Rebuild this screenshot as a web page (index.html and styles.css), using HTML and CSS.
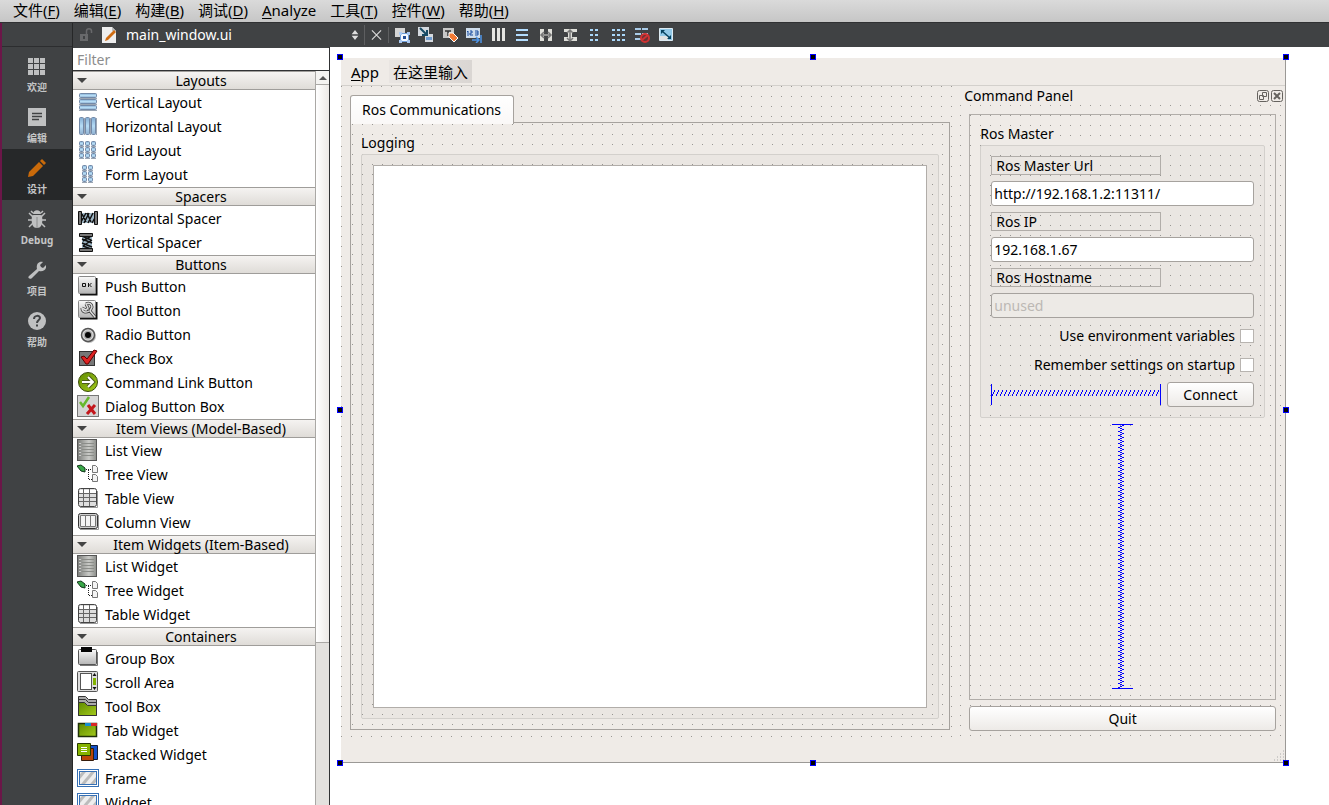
FILE: index.html
```html
<!DOCTYPE html>
<html lang="zh-CN">
<head>
    <meta charset="UTF-8">
    <meta name="viewport" content="width=device-width, initial-scale=1.0">
    <title>main_window.ui</title>
    <link rel="stylesheet" href="styles.css">
</head>
<body>
    <svg class="defs" aria-hidden="true">
        <defs>
            <linearGradient id="blue" x1="0" y1="0" x2="0" y2="1"><stop offset="0" stop-color="#83acd2"/><stop offset=".5" stop-color="#b6dcf5"/><stop offset="1" stop-color="#8fb0d0"/></linearGradient>
            <linearGradient id="grey" x1="0" y1="0" x2="0" y2="1"><stop offset="0" stop-color="#fafafa"/><stop offset="1" stop-color="#b5b5b5"/></linearGradient>
            <linearGradient id="metal"><stop offset="0" stop-color="#7b7d7a"/><stop offset=".6" stop-color="#c9cac7"/><stop offset="1" stop-color="#8b8d89"/></linearGradient>
            <linearGradient id="green" x1="0" y1="0" x2="1" y2="1"><stop offset="0" stop-color="#5f8a00"/><stop offset="1" stop-color="#a4cb1c"/></linearGradient>
            <pattern id="hatch-h" width="4" height="6" patternUnits="userSpaceOnUse"><path d="M2 0h1v2H2zM1 2h1v2H1zM0 4h1v2H0z" fill="#00f"/></pattern>
            <pattern id="hatch-v" width="6" height="4" patternUnits="userSpaceOnUse"><path d="M0 2h2v1H0zM2 1h2v1H2zM4 0h2v1H4zM2 3h2v1H2z" fill="#00f"/></pattern>
            <pattern id="stripes" width="7" height="7" patternUnits="userSpaceOnUse" patternTransform="rotate(40)"><rect width="3" height="7" fill="#bcbcbc"/></pattern>
        </defs>

        <symbol id="i-vlayout" viewBox="0 0 22 22"><g fill="url(#blue)" stroke="#7289a8"><rect x="2.500" y="2.500" width="17" height="4" rx="1"/><rect x="2.500" y="8.500" width="17" height="4" rx="1"/><rect x="2.500" y="14.500" width="17" height="4" rx="1"/></g><path d="M2 7.500h18M2 13.500h18M2 19.500h18" stroke="#9aa5b3"/></symbol>
        <symbol id="i-hlayout" viewBox="0 0 22 22"><g fill="url(#blue)" stroke="#7289a8"><rect x="2.500" y="2.500" width="4" height="17" rx="1"/><rect x="8.500" y="2.500" width="4" height="17" rx="1"/><rect x="14.500" y="2.500" width="4" height="17" rx="1"/></g><path d="M7.500 3v17M13.500 3v17M19.500 3v17" stroke="#9aa5b3"/></symbol>
        <symbol id="i-form" viewBox="0 0 22 22"><g fill="url(#blue)" stroke="#7289a8"><rect x="5.500" y="2.500" width="4" height="4" rx="1"/><rect x="11.500" y="2.500" width="4" height="4" rx="1"/><rect x="5.500" y="8.500" width="4" height="4" rx="1"/><rect x="11.500" y="8.500" width="4" height="4" rx="1"/><rect x="5.500" y="14.500" width="4" height="4" rx="1"/><rect x="11.500" y="14.500" width="4" height="4" rx="1"/></g><path d="M5 7.500h5M11 7.500h5M5 13.500h5M11 13.500h5M5 19.500h5M11 19.500h5" stroke="#9aa5b3"/></symbol>
        <symbol id="i-grid" viewBox="0 0 22 22"><g fill="url(#blue)" stroke="#7289a8"><rect x="2.500" y="2.500" width="4" height="4" rx="1"/><rect x="8.500" y="2.500" width="4" height="4" rx="1"/><rect x="14.500" y="2.500" width="4" height="4" rx="1"/><rect x="2.500" y="8.500" width="4" height="4" rx="1"/><rect x="8.500" y="8.500" width="4" height="4" rx="1"/><rect x="14.500" y="8.500" width="4" height="4" rx="1"/><rect x="2.500" y="14.500" width="4" height="4" rx="1"/><rect x="8.500" y="14.500" width="4" height="4" rx="1"/><rect x="14.500" y="14.500" width="4" height="4" rx="1"/></g><path d="M2 7.500h5M8 7.500h5M14 7.500h5M2 13.500h5M8 13.500h5M14 13.500h5M2 19.500h5M8 19.500h5M14 19.500h5" stroke="#9aa5b3"/></symbol>
        <symbol id="i-hspacer" viewBox="0 0 22 22"><path d="M4 6h14v10H4z" fill="#9db6c6"/><path d="M4 15l5-9M7 16l5-10M11 16l5-10M15 16l4-7M5 7l4 8M10 6l4 9" stroke="#111" stroke-width="1.500"/><path d="M1.500 4.500h3v13h-3zM17.500 4.500h3v13h-3z" fill="#777" stroke="#111"/></symbol>
        <symbol id="i-vspacer" viewBox="0 0 22 22"><path d="M5 4h10v14H5z" fill="#9db6c6"/><path d="M5 5l9 4M5 8l10 4M5 12l10 4M6 15l8 3M14 5l-8 5M15 9l-9 6" stroke="#111" stroke-width="1.500"/><path d="M2.500 2.500h13v3h-13zM2.500 17.500h13v3h-13z" fill="#777" stroke="#111"/></symbol>
        <symbol id="i-push" viewBox="0 0 22 22"><path d="M19.500 3v16.500H3" fill="none" stroke="#111" stroke-width="2"/><rect x="1.500" y="1.500" width="17" height="17" rx="1" fill="url(#grey)" stroke="#888"/><path d="M5.500 8.500h3v3h-3zM11.500 8v4M14.500 8l-2 2 2 2" fill="none" stroke="#111"/></symbol>
        <symbol id="i-tool" viewBox="0 0 22 22"><path d="M19.500 3v16.500H3" fill="none" stroke="#111" stroke-width="2"/><rect x="1.500" y="1.500" width="17" height="17" rx="1" fill="url(#grey)" stroke="#888"/><path d="M9 5c3-2 6 0 6 3l-2 4 5 6M5 9c0 4 4 5 7 3M9 5l2 4-2 2-4-2" fill="none" stroke="#444" stroke-width="3"/><path d="M9 5c3-2 6 0 6 3l-2 4 5 6M5 9c0 4 4 5 7 3M9 5l2 4-2 2-4-2" fill="none" stroke="#ddd" stroke-width="1.500"/></symbol>
        <symbol id="i-radio" viewBox="0 0 22 22"><circle cx="12" cy="13" r="7" fill="#bbb"/><circle cx="11" cy="12" r="6.500" fill="#ddd" stroke="#555" stroke-width="1.500"/><circle cx="11" cy="12" r="4.500" fill="#aaa"/><circle cx="11" cy="12" r="3" fill="#050505"/></symbol>
        <symbol id="i-check" viewBox="0 0 22 22"><rect x="2.500" y="4.500" width="15" height="14" fill="#777" stroke="#333"/><path d="M4 10l3-1 3 3 7-9 3 1-9 13H9z" fill="#df2222" stroke="#610000"/></symbol>
        <symbol id="i-command" viewBox="0 0 22 22"><circle cx="11" cy="11" r="9.500" fill="url(#green)" stroke="#3c4d0c"/><path d="M5 11h10M11 6l5 5-5 5" fill="none" stroke="#4a5a1a" stroke-width="4"/><path d="M5 11h10M11 6l5 5-5 5" fill="none" stroke="#fff" stroke-width="2"/></symbol>
        <symbol id="i-dialog" viewBox="0 0 22 22"><rect x=".5" y=".5" width="21" height="21" fill="#d5d5d5" stroke="#777"/><path d="M3 7l3 4 6-9" fill="none" stroke="#67b82c" stroke-width="2.500"/><path d="M11 10l7 9M18 10l-8 9" fill="none" stroke="#c3161c" stroke-width="3"/></symbol>
        <symbol id="i-list" viewBox="0 0 22 22"><rect x=".5" y=".5" width="19" height="21" fill="url(#metal)" stroke="#555"/><path d="M5 4.500h12M5 7.500h12M5 10.500h12M5 13.500h12M5 16.500h12" stroke="#8b8d89"/><path d="M2 4.500h2M2 7.500h2M2 10.500h2M2 13.500h2M2 16.500h2" stroke="#ccc"/></symbol>
        <symbol id="i-tree" viewBox="0 0 22 22"><path d="M0 3l4-1 4 3v4l-4-1z" fill="#39a848" stroke="#12351a"/><path d="M9 6.500h5M11.500 7v10M12 16.500h3" fill="none" stroke="#222" stroke-dasharray="1 1"/><path d="M15.500 2.500h3l2 2v5h-5zM15.500 11.500h3l2 2v5h-5z" fill="#f3f3f3" stroke="#777"/></symbol>
        <symbol id="i-table" viewBox="0 0 22 22"><path d="M3 20.500h17.500V4" fill="none" stroke="#999"/><rect x="1.500" y="1.500" width="18" height="18" rx="2" fill="#dedede" stroke="#444"/><path d="M3 3h16v3H3z" fill="#fff"/><path d="M2 6.500h17M2 10.500h17M2 14.500h17M6.500 2v17M12.500 2v17" stroke="#666"/></symbol>
        <symbol id="i-column" viewBox="0 0 22 22"><path d="M3 18.500h18.500V4" fill="none" stroke="#999"/><rect x="1.500" y="2.500" width="19" height="15" rx="2" fill="#cfcfcf" stroke="#333"/><path d="M3.500 4.500h5v11h-5zM8.500 4.500h5v11h-5zM13.500 4.500h5v11h-5z" fill="#f4f4f4" stroke="#777"/></symbol>
        <symbol id="i-group" viewBox="0 0 22 22"><path d="M3 18.500h17.500V5" fill="none" stroke="#777"/><rect x="1.500" y="2.500" width="18" height="15" rx="1" fill="url(#grey)" stroke="#555"/><path d="M4 0h11v5H4z" fill="#050505"/></symbol>
        <symbol id="i-scroll" viewBox="0 0 22 22"><rect x=".5" y=".5" width="20" height="20" rx="1" fill="#ddd" stroke="#555"/><rect x="3.500" y="2.500" width="11" height="16" fill="#fff" stroke="#555"/><path d="M16 7h3v7h-3z" fill="#82b200"/><path d="M15.500 5l2-3 2 3zM15.500 16l2 3 2-3z" fill="#111"/></symbol>
        <symbol id="i-toolbox" viewBox="0 0 22 22"><path d="M1.500 1.500h7l3 3h8v16h-18z" fill="#aaa" stroke="#333"/><path d="M1.500 4.500h7l3 3h8" fill="none" stroke="#333"/><path d="M1.500 7.500h6l3 3h9v10h-18z" fill="url(#green)" stroke="#333"/></symbol>
        <symbol id="i-tab" viewBox="0 0 22 22"><path d="M1.500 4.500h18v13h-18z" fill="url(#green)" stroke="#20300a" stroke-width="1.500"/><path d="M8 4h6v3H8z" fill="#178ed0"/><path d="M14 4h6v3h-6z" fill="#d92727"/></symbol>
        <symbol id="i-stack" viewBox="0 0 22 22"><path d="M8.500 2.500h12v14h-10z" fill="#1450c8" stroke="#111b36"/><path d="M4.500 5.500h12v12h-12z" fill="#b94508" stroke="#351c0c"/><path d="M.5.500h13v12H.5z" fill="#86b300" stroke="#283a00"/><path d="M4 4.500h6M4 6.500h6M4 8.500h6" stroke="#fff"/></symbol>
        <symbol id="i-frame" viewBox="0 0 22 22"><rect x=".5" y="2.500" width="21" height="17" fill="#fff" stroke="#3670b5"/><rect x="2.500" y="4.500" width="17" height="13" fill="#eee" stroke="#3670b5"/><rect x="3" y="5" width="16" height="12" fill="url(#stripes)"/></symbol>
    </svg>

    <nav class="menubar">
        <button>文件(<u>F</u>)</button>
        <button>编辑(<u>E</u>)</button>
        <button>构建(<u>B</u>)</button>
        <button>调试(<u>D</u>)</button>
        <button><u>A</u>nalyze</button>
        <button>工具(<u>T</u>)</button>
        <button>控件(<u>W</u>)</button>
        <button>帮助(<u>H</u>)</button>
    </nav>

    <div class="workspace">
        <nav class="modes">
            <div class="modes-top"></div>
            <button class="mode">
                <svg viewBox="0 0 18 18"><path d="M0 1h5v5H0zM6 1h5v5H6zM12 1h5v5h-5zM0 7h5v5H0zM6 7h5v5H6zM12 7h5v5h-5zM0 13h5v5H0zM6 13h5v5H6zM12 13h5v5h-5z"/></svg>
                欢迎
            </button>
            <button class="mode">
                <svg viewBox="0 0 18 18"><path d="M0 0h18v18H0z"/><path d="M4 5.500h10M4 8.500h10M4 11.500h7" stroke="#404244" stroke-width="1.500"/></svg>
                编辑
            </button>
            <button class="mode active">
                <svg viewBox="0 0 18 18"><path d="M0 18l1-5L11 3l4 4L5 17zM12 2l2-2 4 4-2 2z"/></svg>
                设计
            </button>
            <button class="mode">
                <svg viewBox="0 0 18 18"><path d="M5 4c0-5 8-5 8 0zM4 6c0-1 1-1 5-1s5 0 5 1c1 6 0 12-5 12S3 12 4 6z"/><path d="M1 3l4 4M17 3l-4 4M0 10h18M1 17l4-4M17 17l-4-4M5 3L3 1M13 3l2-2" fill="none" stroke="#bfc0c1" stroke-width="1.500"/><path d="M9 7v11" stroke="#8a8b8c"/></svg>
                Debug
            </button>
            <button class="mode">
                <svg viewBox="0 0 18 18"><path d="M1 15L9 8C8 4 10 0 15 1l-3 3 1 2 2 1 3-3c1 5-3 7-7 6l-7 7c-2 2-5 0-3-2z"/></svg>
                项目
            </button>
            <button class="mode">
                <svg viewBox="0 0 18 18"><circle cx="9" cy="9" r="9"/><path d="M6 7c0-4 6-4 6-1 0 2-3 2-3 5M9 12.500v2" fill="none" stroke="#404244" stroke-width="2"/></svg>
                帮助
            </button>
        </nav>

        <div class="editor">
            <div class="toolbar">
                <svg class="lock" viewBox="0 0 14 14"><path d="M1 6h8v7H1z" fill="#68696b"/><path d="M7.500 6V3c0-3 5-3 5 0v2" fill="none" stroke="#68696b" stroke-width="1.500"/><path d="M4 8h2v3H4z" fill="#404244"/></svg>
                <svg class="tool-icon" viewBox="0 0 16 16"><path d="M1 0h10l4 4v12H1z" fill="#eee"/><path d="M11 0l4 4h-4z" fill="#bbb"/><path d="M4 14l1-3 8-8 2 2-8 8z" fill="#cf6c12"/></svg>
                <div class="open-file">
                    <select aria-label="Open documents"><option>main_window.ui</option></select>
                    <svg viewBox="0 0 8 12"><path d="M0 5l4-5 4 5zM0 7l4 5 4-5z" fill="#ddd"/></svg>
                </div>
                <button class="close-file" aria-label="Close"><svg viewBox="0 0 12 12"><path d="M1 1l10 10M11 1L1 11" stroke="#ddd" stroke-width="1.200"/></svg></button>
                <div class="tools">
                    <button aria-label="Edit Widgets"><svg viewBox="0 0 16 16"><path d="M1 1h10v9H1z" fill="#d4d4d4"/><path d="M6.500 6.500h8v8h-8z" fill="#f4f9ff" stroke="#6f9fdc"/><path d="M5 5h3v3H5zM13 5h3v3h-3zM5 13h3v3H5zM13 13h3v3h-3z" fill="#a9c8f0"/><path d="M9 9h3v3H9z" fill="#234c93"/></svg></button>
                    <button aria-label="Edit Signals/Slots"><svg viewBox="0 0 16 16"><path d="M0 0h11v9H0zM7 7h8v8H7z" fill="#d4d9df"/><path d="M8 10h6v3H8z" fill="#6d9bd0"/><path d="M2 1l6 6M9 3v5H4" fill="none" stroke="#174a65" stroke-width="2"/></svg></button>
                    <button aria-label="Edit Buddies"><svg viewBox="0 0 16 16"><path d="M1 1h11v10H1z" fill="#c8c8c8"/><path d="M3 4h6M6 4v5" stroke="#333" stroke-width="1.500"/><path d="M7 6h4l5 5-4 4-5-5z" fill="#f37a35" stroke="#fff"/></svg></button>
                    <button aria-label="Edit Tab Order"><svg viewBox="0 0 16 16"><path d="M0 1h14v10H0z" fill="#cfddec"/><path d="M1 5l1-1v5M4 4h2v2H4v2h3M9 4h3v4H9M9 6h3" fill="none" stroke="#174b9f"/><path d="M6 13h6M10 10l3 3-3 3M15 8v8" fill="none" stroke="#4d95e8" stroke-width="1.500"/></svg></button>
                    <button aria-label="Lay Out Horizontally"><svg viewBox="0 0 16 16"><path d="M2 1h3v13H2zM7 1h3v13H7zM12 1h3v13h-3z" fill="#e5e5e2"/></svg></button>
                    <button aria-label="Lay Out Vertically"><svg viewBox="0 0 16 16"><path d="M2 2h12v2H2zM2 7h12v2H2zM2 12h12v2H2z" fill="#b3ddff"/></svg></button>
                    <button aria-label="Lay Out Horizontally in Splitter"><svg viewBox="0 0 16 16"><path d="M2 2h4v5h4V2h4v12h-4V9H6v5H2z" fill="#deded9"/><path d="M6 5L3 8l3 3M10 5l3 3-3 3M3 8h10" fill="none" stroke="#777" stroke-width="1.500"/></svg></button>
                    <button aria-label="Lay Out Vertically in Splitter"><svg viewBox="0 0 16 16"><path d="M2 2h13v3h-5v5h5v4H2v-4h4V5H2z" fill="#deded9"/><path d="M5 6l3-3 3 3M5 11l3 3 3-3M8 3v11" fill="none" stroke="#777" stroke-width="1.500"/></svg></button>
                    <button aria-label="Lay Out in a Form"><svg viewBox="0 0 16 16"><path d="M4 2h3v2H4zM9 2h3v2H9zM4 7h3v2H4zM9 7h3v2H9zM4 12h3v2H4zM9 12h3v2H9z" fill="#a9d7fa"/></svg></button>
                    <button aria-label="Lay Out in a Grid"><svg viewBox="0 0 16 16"><path d="M2 2h3v2H2zM7 2h3v2H7zM12 2h3v2h-3zM2 7h3v2H2zM7 7h3v2H7zM12 7h3v2h-3zM2 12h3v2H2zM7 12h3v2H7zM12 12h3v2h-3z" fill="#a9d7fa"/></svg></button>
                    <button aria-label="Break Layout"><svg viewBox="0 0 16 16"><path d="M1 1h6v2H1zM8 1h6v2H8zM1 6h6v2H1zM8 6h6v2H8zM1 11h6v2H1z" fill="#a9cbe8"/><circle cx="11" cy="11" r="4" fill="#693336" stroke="#cf3333" stroke-width="2"/><path d="M8 13l6-5" stroke="#cf3333" stroke-width="2"/></svg></button>
                    <button aria-label="Adjust Size"><svg viewBox="0 0 16 16"><path d="M1.500 1.500h13v12h-13z" fill="#91c8e7" stroke="#dceaf2"/><path d="M2 9h8v4H2z" fill="#dfe1e2"/><path d="M4 4l8 7" stroke="#06405d" stroke-width="1.500"/><path d="M3 3h4L3 7zM13 12H9l4-4z" fill="#06405d"/></svg></button>
                </div>
            </div>

            <div class="panes">
                <aside class="widget-box">
                    <input class="filter" type="search" placeholder="Filter" aria-label="Filter">
                    <div class="widget-scroll">
                        <div class="widget-list">
                            <button class="category">Layouts</button>
                            <ul>
                                <li><svg><use href="#i-vlayout"/></svg>Vertical Layout</li>
                                <li><svg><use href="#i-hlayout"/></svg>Horizontal Layout</li>
                                <li><svg><use href="#i-grid"/></svg>Grid Layout</li>
                                <li><svg><use href="#i-form"/></svg>Form Layout</li>
                            </ul>
                            <button class="category">Spacers</button>
                            <ul>
                                <li><svg><use href="#i-hspacer"/></svg>Horizontal Spacer</li>
                                <li><svg><use href="#i-vspacer"/></svg>Vertical Spacer</li>
                            </ul>
                            <button class="category">Buttons</button>
                            <ul>
                                <li><svg><use href="#i-push"/></svg>Push Button</li>
                                <li><svg><use href="#i-tool"/></svg>Tool Button</li>
                                <li><svg><use href="#i-radio"/></svg>Radio Button</li>
                                <li><svg><use href="#i-check"/></svg>Check Box</li>
                                <li><svg><use href="#i-command"/></svg>Command Link Button</li>
                                <li><svg><use href="#i-dialog"/></svg>Dialog Button Box</li>
                            </ul>
                            <button class="category">Item Views (Model-Based)</button>
                            <ul>
                                <li><svg><use href="#i-list"/></svg>List View</li>
                                <li><svg><use href="#i-tree"/></svg>Tree View</li>
                                <li><svg><use href="#i-table"/></svg>Table View</li>
                                <li><svg><use href="#i-column"/></svg>Column View</li>
                            </ul>
                            <button class="category">Item Widgets (Item-Based)</button>
                            <ul>
                                <li><svg><use href="#i-list"/></svg>List Widget</li>
                                <li><svg><use href="#i-tree"/></svg>Tree Widget</li>
                                <li><svg><use href="#i-table"/></svg>Table Widget</li>
                            </ul>
                            <button class="category">Containers</button>
                            <ul>
                                <li><svg><use href="#i-group"/></svg>Group Box</li>
                                <li><svg><use href="#i-scroll"/></svg>Scroll Area</li>
                                <li><svg><use href="#i-toolbox"/></svg>Tool Box</li>
                                <li><svg><use href="#i-tab"/></svg>Tab Widget</li>
                                <li><svg><use href="#i-stack"/></svg>Stacked Widget</li>
                                <li><svg><use href="#i-frame"/></svg>Frame</li>
                                <li><svg><use href="#i-frame"/></svg>Widget</li>
                            </ul>
                        </div>
                        <div class="scrollbar">
                            <button class="scroll-up" aria-label="Scroll up"></button>
                            <div class="thumb"></div>
                        </div>
                    </div>
                </aside>

                <main class="canvas">
                    <div class="form-window">
                        <nav class="form-menu">
                            <button><u>A</u>pp</button>
                            <button class="type-here">在这里输入</button>
                        </nav>

                        <div class="form-body">
                            <section class="central">
                                <button class="tab">Ros Communications</button>
                                <div class="tab-page">
                                    <label class="group-title" for="log">Logging</label>
                                    <div class="group log-group">
                                        <textarea id="log"></textarea>
                                    </div>
                                </div>
                            </section>

                            <section class="dock">
                                <header class="dock-title">
                                    <h2>Command Panel</h2>
                                    <button aria-label="Float"><svg viewBox="0 0 12 12"><rect x=".5" y=".5" width="11" height="11" rx="2"/><path d="M5.500 2.500h4v4h-4zM2.500 5.500h4v4h-4z"/></svg></button>
                                    <button aria-label="Close"><svg viewBox="0 0 12 12"><rect x=".5" y=".5" width="11" height="11" rx="2"/><path d="M3 3l6 6M9 3L3 9" stroke-width="2"/></svg></button>
                                </header>
                                <div class="dock-body">
                                    <div class="frame">
                                        <h3 class="group-title">Ros Master</h3>
                                        <form class="group settings">
                                            <label class="boxed" for="master">Ros Master Url</label>
                                            <input class="field" id="master" type="text" value="http://192.168.1.2:11311/">
                                            <label class="boxed" for="ip">Ros IP</label>
                                            <input class="field" id="ip" type="text" value="192.168.1.67">
                                            <label class="boxed" for="host">Ros Hostname</label>
                                            <input class="field" id="host" type="text" value="unused" disabled>
                                            <label class="option">Use environment variables <input type="checkbox"></label>
                                            <label class="option">Remember settings on startup <input type="checkbox"></label>
                                            <svg class="spacer-h"><rect y="6" width="100%" height="6" fill="url(#hatch-h)"/></svg>
                                            <button class="push" type="button">Connect</button>
                                        </form>
                                        <svg class="spacer-v"><rect x="6" width="6" height="100%" fill="url(#hatch-v)"/></svg>
                                    </div>
                                    <button class="push" type="button">Quit</button>
                                </div>
                            </section>
                        </div>

                        <footer class="form-status">
                            <svg viewBox="0 0 12 12"><path d="M10 1h1M7 4h1M10 4h1M4 7h1M7 7h1M10 7h1M1 10h1M4 10h1M7 10h1M10 10h1" stroke="#aaa"/></svg>
                        </footer>

                        <i class="handle top left"></i>
                        <i class="handle top center"></i>
                        <i class="handle top right"></i>
                        <i class="handle middle left"></i>
                        <i class="handle middle right"></i>
                        <i class="handle bottom left"></i>
                        <i class="handle bottom center"></i>
                        <i class="handle bottom right"></i>
                    </div>
                </main>
            </div>
        </div>
    </div>
</body>
</html>
```
FILE: styles.css
```css
* {
    box-sizing: border-box;
}

body {
    display: flex;
    flex-direction: column;
    height: 100vh;
    margin: 0;
    overflow: hidden;
    font-family: "Noto Sans", "Noto Sans CJK SC", sans-serif;
    font-size: 14px;
    line-height: 20px;
    color: #000;
    background: #fff;
}

button, input, select, textarea {
    margin: 0;
    padding: 0;
    border: none;
    border-radius: 0;
    outline: none;
    background: none;
    font: inherit;
    color: inherit;
}

svg {
    display: block;
    flex: none;
}

u {
    text-underline-offset: 2px;
}

h2, h3, ul {
    margin: 0;
    padding: 0;
    font-size: inherit;
    font-weight: normal;
    list-style: none;
}

.defs {
    position: absolute;
    width: 0;
    height: 0;
}

.menubar {
    display: flex;
    flex: none;
    height: 23px;
    padding-left: 6px;
    background: linear-gradient(#dadada, #c6c6c6);
    border-bottom: 1px solid #303133;
}

.menubar button {
    padding: 0 7px 4px;
    font-size: 15px;
    white-space: nowrap;
}

.workspace {
    display: flex;
    flex: 1;
    min-height: 0;
}

/* mode selector */
.modes {
    flex: none;
    width: 73px;
    background: #404244;
    border-left: 2px solid #6b1648;
    border-right: 1px solid #262728;
}

.modes-top {
    height: 24px;
    border-bottom: 1px solid #2c2d2f;
}

.mode {
    display: flex;
    flex-direction: column;
    align-items: center;
    gap: 5px;
    width: 100%;
    height: 51px;
    padding-top: 10px;
    font-size: 10px;
    font-weight: bold;
    line-height: 14px;
    color: #c4c5c6;
}

.mode svg {
    width: 18px;
    height: 18px;
    fill: #bfc0c1;
}

.mode.active {
    background: #262829;
}

.mode.active svg {
    fill: #c96a0a;
}

.editor {
    display: flex;
    flex: 1;
    flex-direction: column;
    min-width: 0;
}

.toolbar {
    display: flex;
    flex: none;
    align-items: center;
    height: 24px;
    padding-left: 6px;
    background: #404244;
    color: #fff;
}

.lock {
    width: 14px;
    height: 14px;
    margin-right: 8px;
}

.tool-icon {
    width: 16px;
    height: 16px;
}

.open-file {
    display: flex;
    align-items: center;
    width: 239px;
    margin-left: 9px;
    padding-right: 5px;
    border-right: 1px solid #5e5f61;
}

.open-file select {
    flex: 1;
    appearance: none;
}

.open-file svg {
    width: 8px;
    height: 10px;
}

.close-file {
    padding: 0 6px;
    border-right: 1px solid #5e5f61;
}

.close-file svg {
    width: 11px;
    height: 16px;
}

.tools {
    display: flex;
    gap: 8px;
    padding-left: 5px;
}

.tools svg {
    width: 16px;
    height: 16px;
}

.panes {
    display: flex;
    flex: 1;
    min-height: 0;
}

/* widget box */
.widget-box {
    display: flex;
    flex: none;
    flex-direction: column;
    width: 257px;
    border-right: 1px solid #303133;
}

.filter {
    flex: none;
    height: 24px;
    padding: 0 4px;
    border-top: 1px solid #404244;
    border-bottom: 1px solid #303133;
}

.filter::placeholder {
    color: #8d8d8d;
}

.widget-scroll {
    display: flex;
    flex: 1;
    min-height: 0;
}

.widget-list {
    flex: 1;
    overflow: hidden;
}

.widget-list ul {
    padding-top: 1px;
}

.widget-list li {
    display: flex;
    align-items: center;
    gap: 6px;
    height: 24px;
    padding-left: 4px;
}

.widget-list li svg {
    width: 22px;
    height: 22px;
    margin-bottom: 2px;
}

.category {
    display: flex;
    align-items: center;
    justify-content: center;
    width: 100%;
    height: 19px;
    border-top: 1px solid #9f9d9a;
    border-bottom: 1px solid #9f9d9a;
    background: linear-gradient(#f5f3f1, #dfdcd8);
}

.category::before {
    content: "";
    margin-right: auto;
    margin-left: 4px;
    border: 5px solid transparent;
    border-top-color: #444;
    border-bottom-width: 0;
}

.category::after {
    content: "";
    margin-left: auto;
}

.scrollbar {
    display: flex;
    flex-direction: column;
    width: 14px;
    background: #e3e1de;
    border-left: 1px solid #aaa8a5;
}

.scroll-up {
    display: flex;
    align-items: center;
    justify-content: center;
    height: 14px;
    background: #f4f3f1;
    border-bottom: 1px solid #aaa8a5;
}

.scroll-up::before {
    content: "";
    border: 4px solid transparent;
    border-top-width: 0;
    border-bottom-color: #555;
}

.thumb {
    height: 76%;
    background: linear-gradient(to right, #fff, #ece9e6);
    border-bottom: 1px solid #aaa8a5;
}

/* form being edited */
.canvas {
    display: flex;
    flex: 1;
    min-width: 0;
    padding: 11px 43px 42px 11px;
    background: #fff;
}

.form-window {
    position: relative;
    display: flex;
    flex: 1;
    flex-direction: column;
    min-width: 0;
    background: #efebe7;
    border-right: 1px solid #9b9996;
    border-bottom: 1px solid #9b9996;
}

.form-menu {
    display: flex;
    flex: none;
    height: 28px;
    padding-left: 6px;
    border-bottom: 1px solid #d3d0cc;
}

.form-menu button {
    padding: 0 4px;
    font-size: 15px;
}

.form-menu .type-here {
    margin: 2px 0 2px 6px;
    background: linear-gradient(to right, #e9e5e2, #dad6d3);
}

.form-body {
    display: flex;
    flex: 1;
    min-height: 0;
}

/* 10px design grid */
.central, .tab-page, .dock-body {
    background-color: #efebe7;
    background-image: conic-gradient(from 270deg at 1px 1px, #9a9894 90deg, transparent 0);
    background-size: 10px 10px;
}

.central {
    display: flex;
    flex: 1;
    flex-direction: column;
    align-items: flex-start;
    padding: 9px 10px 8px 9px;
}

.tab {
    position: relative;
    height: 29px;
    margin-bottom: -2px;
    padding: 0 12px 0 11px;
    background: linear-gradient(#fff, #faf8f7);
    border: 1px solid #a6a29e;
    border-bottom: none;
    border-radius: 3px 3px 0 0;
}

.tab-page {
    display: flex;
    flex: 1;
    flex-direction: column;
    width: 100%;
    padding: 10px;
    border: 1px solid #a6a29e;
    background-position: 1px 1px;
}

.group-title {
    display: block;
    flex: none;
    height: 21px;
}

.group {
    padding: 10px;
    background: rgba(90, 100, 80, 0.03);
    border: 1px solid #d3d0cc;
    border-radius: 2px;
}

.log-group {
    display: flex;
    flex: 1;
    padding: 10px 11px;
}

.log-group textarea {
    flex: 1;
    background: #fff;
    border: 1px solid #b1ada9;
    resize: none;
}

.dock {
    display: flex;
    flex: none;
    flex-direction: column;
    width: 34.4%;
}

.dock-title {
    display: flex;
    flex: none;
    align-items: center;
    gap: 2px;
    height: 19px;
    padding: 0 2px 0 4px;
}

.dock-title h2 {
    flex: 1;
}

.dock-title svg {
    width: 12px;
    height: 12px;
    fill: none;
    stroke: #66635f;
}

.dock-body {
    display: flex;
    flex: 1;
    flex-direction: column;
    gap: 6px;
    padding: 9px 9px 7px;
}

.frame {
    display: flex;
    flex: 1;
    flex-direction: column;
    padding: 9px 10px 10px;
    border: 1px solid #b1ada9;
}

.settings {
    display: grid;
    grid-template-columns: 1fr 87px;
    gap: 6px;
    margin-bottom: 6px;
}

.boxed {
    height: 19px;
    padding-left: 4px;
    border: 1px solid #b1ada9;
    line-height: 18px;
}

.field {
    grid-column: 1 / -1;
    width: 100%;
    height: 25px;
    padding: 0 2px;
    background: #fff;
    border: 1px solid #a6a29e;
    border-radius: 3px;
}

.field:disabled {
    background: #edeae6;
    color: #bcb8b4;
}

.option {
    display: flex;
    grid-column: 1 / -1;
    align-items: center;
    justify-content: flex-end;
    gap: 5px;
    height: 23px;
}

.option input {
    appearance: none;
    width: 14px;
    height: 14px;
    background: #fff;
    border: 1px solid #b8b4b0;
}

.push {
    flex: none;
    height: 25px;
    background: linear-gradient(#fff, #edeae7);
    border: 1px solid #a6a29e;
    border-radius: 3px;
}

.spacer-h {
    align-self: center;
    width: 100%;
    height: 21px;
    border-left: 1px solid #00f;
    border-right: 1px solid #00f;
}

.spacer-v {
    flex: 1;
    align-self: center;
    width: 21px;
    min-height: 0;
    border-top: 1px solid #00f;
    border-bottom: 1px solid #00f;
}

.form-status {
    display: flex;
    flex: none;
    align-items: flex-end;
    justify-content: flex-end;
    height: 24px;
}

.form-status svg {
    width: 12px;
    height: 12px;
}

/* selection handles */
.handle {
    position: absolute;
    width: 6px;
    height: 6px;
    background: #000;
    border: 1px solid #00f;
}

.handle.top {
    top: -4px;
}

.handle.middle {
    top: calc(50% - 3px);
}

.handle.bottom {
    bottom: -4px;
}

.handle.left {
    left: -4px;
}

.handle.center {
    left: calc(50% - 3px);
}

.handle.right {
    right: -4px;
}
```
